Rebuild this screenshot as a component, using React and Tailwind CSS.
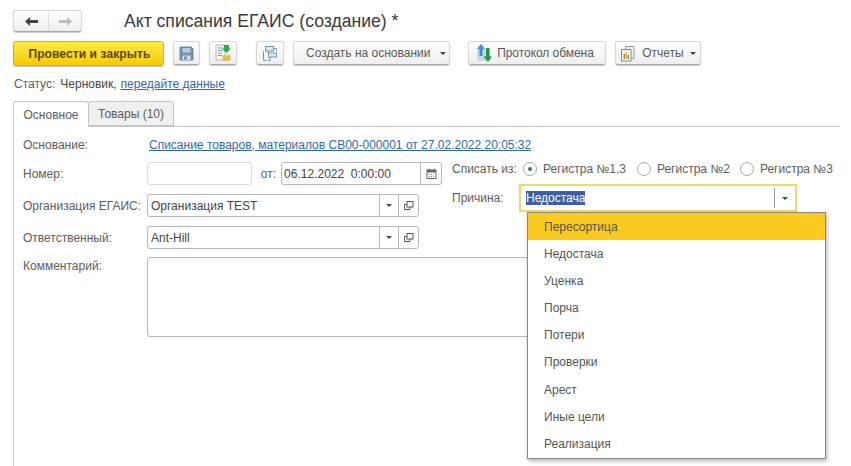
const items = ['Недостача', 'Уценка', 'Порча', 'Потери', 'Проверки', 'Арест', 'Иные цели', 'Реализация']

function Caret() {
  return <span className="inline-block w-0 h-0 border-x-[3px] border-x-transparent border-t-[3px] border-t-[#444]" />
}

function ToolButton({ children, className = '' }) {
  return (
    <button className={`h-[24px] flex items-center justify-center rounded-[3px] border border-[#d6d6d6] border-b-[#a8a8a8] bg-gradient-to-b from-white to-[#eeeeee] shadow-[0_1px_1px_rgba(0,0,0,0.2)] text-[#595959] ${className}`}>
      {children}
    </button>
  )
}

function NavArrow({ color, flip }) {
  return (
    <svg width="13" height="9" viewBox="0 0 13 9" className={flip ? 'rotate-180' : ''}>
      <path d="M0 4.500L5 0v3h8v3H5v3z" fill={color} />
    </svg>
  )
}

function FloppyIcon() {
  return (
    <svg width="15" height="15" viewBox="0 0 15 15">
      <path d="M1 1h11l2 2v11H1z" fill="#7590ad" stroke="#6b85a1" />
      <rect x="3.500" y="2" width="8" height="4.500" fill="#b9c9da" />
      <rect x="3.500" y="9.500" width="8" height="4.500" fill="#d3dbe3" />
      <rect x="5" y="10.500" width="3" height="3" fill="#7590ad" />
    </svg>
  )
}

function PostIcon() {
  return (
    <svg width="18" height="18" viewBox="0 0 18 18">
      <path d="M2 1h9v15H2z" fill="#f6f7f2" stroke="#b4bab0" />
      <path d="M4 4h5M4 6.500h5M4 9h4M4 11.500h4" stroke="#8f9aa5" />
      <ellipse cx="12.500" cy="12" rx="4" ry="1.500" fill="#e9cf6d" />
      <path d="M8.500 12v3.500c0 1 1.800 1.500 4 1.500s4-.5 4-1.500V12z" fill="#e2c04f" />
      <path d="M10 1h5v3.500h2L12.500 9 8 4.500h2z" fill="#2faa4a" />
    </svg>
  )
}

function StructureIcon() {
  return (
    <svg width="16" height="17" viewBox="0 0 16 17" fill="none" stroke="#6d9abb">
      <rect x="3.500" y="1.500" width="8" height="4.500" fill="#dbe8f2" />
      <rect x="6.500" y="8" width="8" height="4" fill="#dbe8f2" />
      <path d="M1.500 6v9.500h3M14.500 3.500V6M12 3.500h2.500M6 6v2M8 12v3.500h-2" />
    </svg>
  )
}

function ExchangeIcon() {
  return (
    <svg width="17" height="18" viewBox="0 0 17 18">
      <rect x="1" y="5" width="13" height="12" fill="#ccd8e4" />
      <path d="M5 0L9 5H6.500v7h-3V5H1z" fill="#3f8fde" />
      <path d="M12 18L7.500 12.500H10V4h3.500v8.500H16z" fill="#1f9a45" />
    </svg>
  )
}

function ReportsIcon() {
  return (
    <svg width="16" height="17" viewBox="0 0 16 17">
      <path d="M5.500 1.500h8.500v12H5.500z" fill="#f2f2f2" stroke="#9a9a9a" />
      <path d="M1.500 4.500h9.500v11.500H1.500z" fill="#fbfbf6" stroke="#858585" />
      <rect x="3.500" y="9" width="1.500" height="5" fill="#d96a4a" />
      <rect x="5.500" y="7" width="1.500" height="7" fill="#e3b23f" />
      <rect x="7.500" y="10" width="1.500" height="4" fill="#4fa35f" />
    </svg>
  )
}

function CalendarIcon() {
  return (
    <svg width="11" height="11" viewBox="0 0 11 11">
      <rect x="1" y="2" width="9" height="8.500" fill="#fff" stroke="#666" />
      <rect x="1" y="2" width="9" height="2.500" fill="#666" />
      <path d="M3 .5v2M8 .5v2" stroke="#666" />
      <path d="M3 6.500h5M3 8.500h5" stroke="#888" strokeDasharray="1 1" />
    </svg>
  )
}

function OpenIcon() {
  return (
    <svg width="11" height="11" viewBox="0 0 11 11" fill="none" stroke="#555">
      <rect x="4" y="1.500" width="6" height="5.500" />
      <path d="M4 4.500H1.500v5H7V7" />
    </svg>
  )
}

function Radio({ checked, label, className = '' }) {
  return (
    <div className={`flex items-center ${className}`}>
      <span className="w-[14px] h-[14px] rounded-full border border-[#a8a8a8] bg-white flex items-center justify-center">
        {checked && <span className="w-[4px] h-[4px] rounded-full bg-[#2e7d4f]" />}
      </span>
      <span className="ml-[6px]">{label}</span>
    </div>
  )
}

function Combo({ value }) {
  return (
    <div className="w-[272px] h-[23px] rounded-[3px] border border-[#b5b5b5] flex items-center text-[#444]">
      <span className="flex-1 pl-[3px]">{value}</span>
      <span className="w-[19px] h-full border-l border-[#b5b5b5] flex items-center justify-center"><Caret /></span>
      <span className="w-[20px] h-full border-l border-[#b5b5b5] flex items-center justify-center"><OpenIcon /></span>
    </div>
  )
}

export default function App() {
  return (
    <div className="relative w-[851px] h-[466px] overflow-hidden bg-white flex flex-col text-[12px] text-[#5c5c5c] font-['Liberation_Sans',sans-serif]">
      <div className="flex items-center pl-[13px] pt-[10px]">
        <div className="w-[69px] h-[22px] flex rounded-[3px] border border-[#d6d6d6] border-b-[#a8a8a8] bg-gradient-to-b from-white to-[#eeeeee] shadow-[0_1px_1px_rgba(0,0,0,0.2)]">
          <span className="w-[35px] border-r border-[#dedede] flex items-center justify-center"><NavArrow color="#444" /></span>
          <span className="flex-1 flex items-center justify-center"><NavArrow color="#bdbdbd" flip /></span>
        </div>
        <h1 className="ml-[42px] text-[17.6px] leading-[22px] text-[#3a3a3a]">Акт списания ЕГАИС (создание) *</h1>
      </div>

      <div className="flex pl-[13px] mt-[9px]">
        <button className="w-[151px] h-[25px] pl-[2px] rounded-[3px] border border-[#d4b200] bg-gradient-to-b from-[#ffe93d] to-[#f5cb00] shadow-[0_1px_1px_rgba(0,0,0,0.25)] font-bold text-[#574b00] tracking-[0.1px]">Провести и закрыть</button>
        <ToolButton className="w-[27px] ml-[9px]"><FloppyIcon /></ToolButton>
        <ToolButton className="w-[28px] ml-[9px]"><PostIcon /></ToolButton>
        <ToolButton className="w-[28px] ml-[19px]"><StructureIcon /></ToolButton>
        <ToolButton className="w-[157px] ml-[9px] gap-[9px] !justify-start pl-[12px]">Создать на основании <Caret /></ToolButton>
        <ToolButton className="w-[138px] ml-[18px] gap-[4px] pr-[4px] tracking-[-0.05px]"><ExchangeIcon />Протокол обмена</ToolButton>
        <ToolButton className="w-[86px] ml-[9px] gap-[6px]"><ReportsIcon />Отчеты <Caret /></ToolButton>
      </div>

      <div className="flex pl-[14px] mt-[11px] leading-[14px]">
        <span>Статус:</span>
        <span className="ml-[5px] text-[#444]">Черновик,</span>
        <a className="ml-[4px] text-[#2f68ad] underline">передайте данные</a>
      </div>

      <div className="flex pl-[13px] mt-[10px] h-[25px] relative z-10">
        <div className="w-[76px] bg-white border border-b-0 border-[#c4c4c4] rounded-t-[3px] flex items-center justify-center h-[26px]">Основное</div>
        <div className="w-[85px] bg-[#f0f0f0] border border-l-0 border-[#c4c4c4] rounded-t-[3px] flex items-center justify-center">Товары (10)</div>
      </div>

      <div className="flex-1 ml-[13px] mr-[11px] border-l border-t border-[#c4c4c4] pl-[9px] pt-[9px]">
        <div className="flex items-center h-[17px]">
          <span className="w-[126px]">Основание:</span>
          <a className="text-[#2f68ad] underline">Списание товаров, материалов СВ00-000001 от 27.02.2022 20:05:32</a>
        </div>

        <div className="flex mt-[9px]">
          <div className="w-[419px] flex flex-col gap-[9px]">
            <div className="flex items-center">
              <span className="w-[124px]">Номер:</span>
              <div className="w-[105px] h-[23px] rounded-[3px] border border-[#dcdcdc]" />
              <span className="ml-[9px]">от:</span>
              <div className="ml-[5px] w-[161px] h-[23px] rounded-[3px] border border-[#b5b5b5] flex items-center text-[#444]">
                <span className="flex-1 pl-[2px] whitespace-pre">06.12.2022  0:00:00</span>
                <span className="w-[21px] h-full border-l border-[#b5b5b5] flex items-center justify-center"><CalendarIcon /></span>
              </div>
            </div>
            <div className="flex items-center">
              <span className="w-[124px]">Организация ЕГАИС:</span>
              <Combo value="Организация TEST" />
            </div>
            <div className="flex items-center">
              <span className="w-[124px]">Ответственный:</span>
              <Combo value="Ant-Hill" />
            </div>
          </div>

          <div className="ml-[10px]">
            <div className="flex items-center h-[14px]">
              <span className="w-[71px]">Списать из:</span>
              <Radio checked label="Регистра №1,3" />
              <Radio label="Регистра №2" className="ml-[11px]" />
              <Radio label="Регистра №3" className="ml-[10px]" />
            </div>
            <div className="flex items-center mt-[8px]">
              <span className="w-[67px]">Причина:</span>
              <div className="w-[278px] h-[28px] border-2 border-[#f0d96a] flex items-center">
                <span className="flex-1 pl-[5px]"><span className="bg-[#3d5fa8] text-white">Недостача</span></span>
                <span className="w-[21px] h-[20px] border-l border-[#999] flex items-center justify-center"><Caret /></span>
              </div>
            </div>
          </div>
        </div>

        <div className="flex mt-[8px]">
          <span className="w-[124px]">Комментарий:</span>
          <div className="w-[650px] h-[80px] rounded-[3px] border border-[#b5b5b5]" />
        </div>
      </div>

      <ul className="absolute left-[527px] top-[212px] w-[299px] h-[247px] bg-white border border-[#8a8a8a] shadow-[1px_2px_4px_rgba(0,0,0,0.3)] text-[#555]">
        <li className="h-[27px] bg-[#fbca1e] flex items-center pl-[16px]">Пересортица</li>
        {items.map((item) => (
          <li key={item} className="h-[27.2px] flex items-center pl-[16px]">{item}</li>
        ))}
      </ul>
    </div>
  )
}
